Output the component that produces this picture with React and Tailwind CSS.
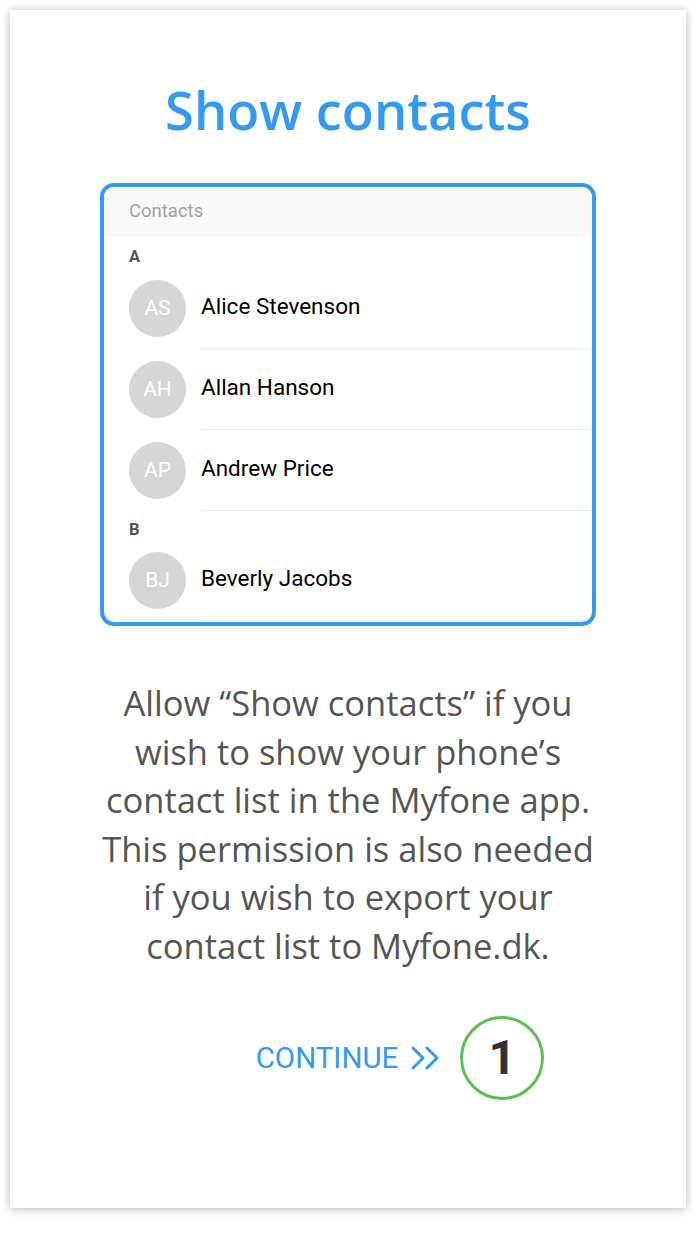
import React from 'react';

const contacts = [
    { section: 'A', items: [
        { initials: 'AS', name: 'Alice Stevenson' },
        { initials: 'AH', name: 'Allan Hanson' },
        { initials: 'AP', name: 'Andrew Price' },
    ] },
    { section: 'B', items: [
        { initials: 'BJ', name: 'Beverly Jacobs' },
    ] },
];

function ContactRow({ initials, name }) {
    return (
        <div className="flex h-[81px] items-center pl-[25px]">
            <div className="flex h-[57px] w-[57px] shrink-0 items-center justify-center rounded-full bg-[#d6d6d6] text-[21px] text-white">
                {initials}
            </div>
            <div className="ml-[15px] flex h-full flex-1 items-center border-b border-[#ececec] pb-[3px] text-[22.5px] text-black">
                {name}
            </div>
        </div>
    );
}

export default function App() {
    return (
        <div className="min-h-[1238px] bg-white p-[10px] pb-[30px]" style={{ fontFamily: 'Roboto, "Liberation Sans", sans-serif' }}>
            <div className="flex h-[1198px] w-[676px] flex-col items-center bg-white shadow-[0_1px_9px_rgba(0,0,0,0.28)]">

                {/* Titel */}
                <h1 className="mt-[64px] text-[52.5px] font-semibold leading-[72px] text-[#3399f3]" style={{ fontFamily: '"Open Sans", sans-serif' }}>
                    Show contacts
                </h1>

                {/* Kontaktliste */}
                <div className="mt-[37px] h-[443px] w-[496px] overflow-hidden rounded-[14px] border-4 border-[#3399f3] bg-white">
                    <div className="flex h-[50px] items-center bg-[#f9f9f9] pl-[25px] text-[18.5px] text-[#a3a3a3]">
                        Contacts
                    </div>
                    {contacts.map((group, i) => (
                        <div key={group.section}>
                            <div className={`flex items-end pl-[25px] text-[16.5px] font-bold leading-[19px] text-[#555] ${i === 0 ? 'h-[31px] pb-[2px]' : 'h-[29px] pb-[1px]'}`}>
                                {group.section}
                            </div>
                            {group.items.map((c) => (
                                <ContactRow key={c.initials} {...c} />
                            ))}
                        </div>
                    ))}
                </div>

                {/* Forklaring */}
                <p className="mt-[53px] text-center text-[34.5px] leading-[48.5px] text-[#555]" style={{ fontFamily: '"Open Sans", sans-serif' }}>
                    Allow “Show contacts” if you<br />
                    wish to show your phone’s<br />
                    contact list in the Myfone app.<br />
                    This permission is also needed<br />
                    if you wish to export your<br />
                    contact list to Myfone.dk.
                </p>

                {/* Knap */}
                <div className="relative mt-[66px] flex items-center">
                    <span className="text-[29.5px] text-[#3399f3]">CONTINUE</span>
                    <svg className="ml-[12px]" width="30" height="26" viewBox="0 0 30 26" fill="none" stroke="#3399f3" strokeWidth="3" strokeLinecap="round" strokeLinejoin="round">
                        <path d="M3 3l10 10-10 10" />
                        <path d="M17 3l10 10-10 10" />
                    </svg>
                    <div className="absolute left-[calc(100%+20px)] top-1/2 flex h-[84px] w-[84px] -translate-y-1/2 items-center justify-center rounded-full border-[3px] border-[#5cbf53] bg-white text-[48px] font-bold text-[#2e333a]">
                        1
                    </div>
                </div>
            </div>
        </div>
    );
}
